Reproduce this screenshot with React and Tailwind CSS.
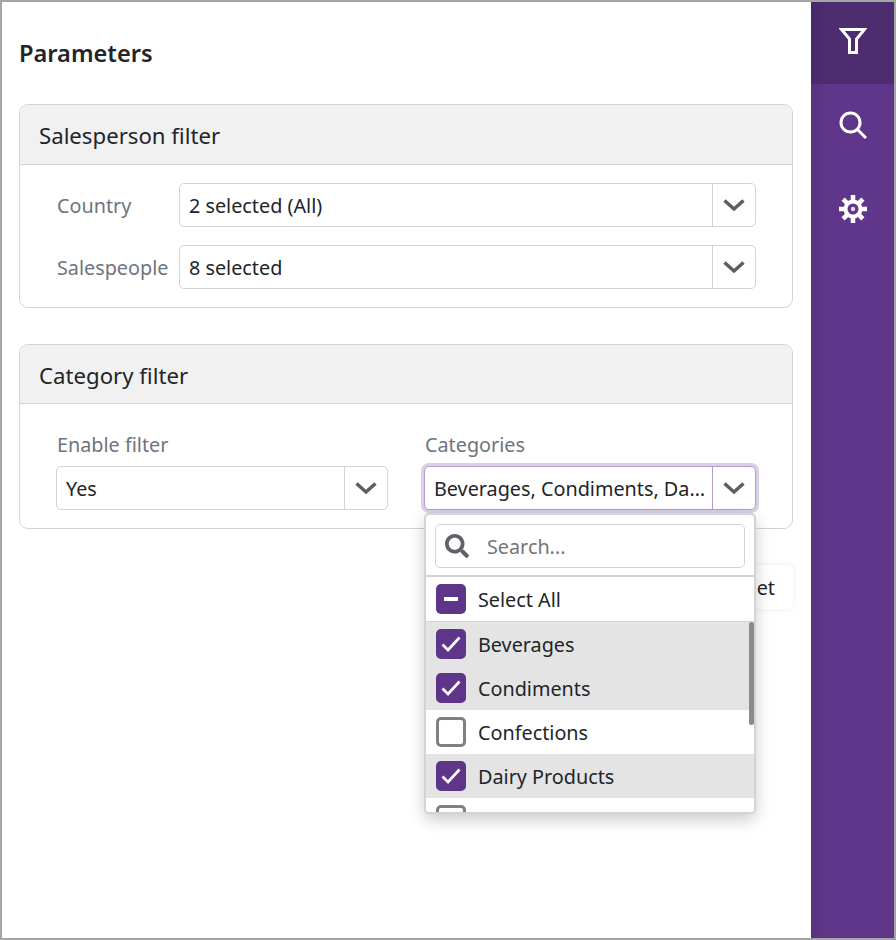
import React from 'react'
import { FaSearch } from 'react-icons/fa'

function Chevron() {
    return (
        <svg width="22" height="14" viewBox="0 0 22 14" fill="none" stroke="#5a5e62" strokeWidth="3.5">
            <path d="M1.5 2.5 L11 11 L20.5 2.5" />
        </svg>
    )
}

function Select({ value, focused, className = '' }) {
    const border = focused ? 'border-[#b39dcc] shadow-[0_0_0_3px_#d9cfe6]' : 'border-[#d3d3d3]'
    const divider = focused ? 'border-[#b39dcc]' : 'border-[#d3d3d3]'
    return (
        <div className={`flex h-[44px] items-stretch rounded-[5px] border bg-white ${border} ${className}`}>
            <div className="min-w-0 flex-1 truncate pl-[9px] pr-[5px] text-[19.8px] leading-[44px] text-[#212529]">{value}</div>
            <div className={`flex w-[43px] shrink-0 items-center justify-center border-l ${divider}`}>
                <Chevron />
            </div>
        </div>
    )
}

function Card({ title, headerClass, children }) {
    return (
        <section className="rounded-[9px] border border-[#d3d3d3] bg-white">
            <h2 className={`rounded-t-[8px] border-b border-[#d3d3d3] bg-[#f1f1f1] pl-[19px] text-[22.2px] font-normal leading-[61px] text-[#212529] ${headerClass}`}>{title}</h2>
            {children}
        </section>
    )
}

function CheckBox({ state }) {
    if (state === 'off') {
        return <span className="h-[30px] w-[30px] shrink-0 rounded-[5px] border-[3px] border-[#808080] bg-white" />
    }
    return (
        <span className="flex h-[30px] w-[30px] shrink-0 items-center justify-center rounded-[5px] bg-[#5f358a]">
            {state === 'on' ? (
                <svg width="20" height="16" viewBox="0 0 20 16" fill="none" stroke="white" strokeWidth="2.6">
                    <path d="M1.5 8.5 L7 14 L18.5 1.5" />
                </svg>
            ) : (
                <span className="h-[4px] w-[14px] bg-white" />
            )}
        </span>
    )
}

function Row({ label, state }) {
    return (
        <div className={`flex h-[44px] shrink-0 items-center gap-3 pl-[10px] text-[19.8px] text-[#212529] ${state === 'on' ? 'bg-[#e4e4e4]' : 'bg-white'}`}>
            <CheckBox state={state} />
            <span className="pt-[2px]">{label}</span>
        </div>
    )
}

const categories = [
    { label: 'Beverages', state: 'on' },
    { label: 'Condiments', state: 'on' },
    { label: 'Confections', state: 'off' },
    { label: 'Dairy Products', state: 'on' },
    { label: 'Grains/Cereals', state: 'off' },
]

function Dropdown() {
    return (
        <div className="absolute left-0 top-[83px] z-10 h-[301px] w-[332px] overflow-hidden rounded-[5px] border-2 border-[#d3d3d3] bg-white shadow-[0_6px_16px_rgba(0,0,0,0.2)]">
            <div className="h-[62px] border-b-2 border-[#d3d3d3] pl-[9px] pr-[9px] pt-[9px]">
                <div className="flex h-[44px] items-center rounded-[5px] border border-[#d3d3d3] pl-[9px]">
                    <FaSearch size={24} color="#5f6368" />
                    <span className="ml-[18px] pt-[2px] text-[19.8px] text-[#757575]">Search...</span>
                </div>
            </div>
            <Row label="Select All" state="some" />
            <div className="relative border-t border-[#d3d3d3]">
                {categories.map((c) => (
                    <Row key={c.label} label={c.label} state={c.state} />
                ))}
                <div className="absolute right-0 top-0 h-[103px] w-[5px] rounded-full bg-[#8a8a8a]" />
            </div>
        </div>
    )
}

function Gear() {
    return (
        <svg width="28" height="28" viewBox="0 0 28 28">
            <g stroke="white" strokeWidth="4.5">
                <path d="M14 0 V28 M0 14 H28 M4.1 4.1 L23.9 23.9 M23.9 4.1 L4.1 23.9" />
            </g>
            <circle cx="14" cy="14" r="9.5" fill="white" />
            <circle cx="14" cy="14" r="5.5" fill="#60368b" />
            <circle cx="14" cy="14" r="2.2" fill="#e6dcf0" />
        </svg>
    )
}

function Sidebar() {
    return (
        <nav className="flex w-[83px] shrink-0 flex-col bg-[linear-gradient(90deg,#57327c,#60368b_16px)] text-white">
            <div className="flex h-[82px] items-center justify-center bg-[linear-gradient(90deg,#48296a,#4d2c70_16px)] pb-[4px]">
                <svg width="28" height="26" viewBox="0 0 28 26" fill="none" stroke="white" strokeWidth="3">
                    <path d="M2.5 1.5 H25.5 L17.5 11 V24.5 H10.5 V11 Z" />
                </svg>
            </div>
            <div className="flex h-[84px] items-center justify-center pb-[3px]">
                <svg width="28" height="28" viewBox="0 0 28 28" fill="none" stroke="white" strokeWidth="3">
                    <circle cx="11.5" cy="11.5" r="9.5" />
                    <path d="M18.5 18.5 L27 27" />
                </svg>
            </div>
            <div className="flex h-[84px] items-center justify-center pb-[2px]">
                <Gear />
            </div>
        </nav>
    )
}

export default function App() {
    return (
        <div className="flex h-[940px] w-[896px] overflow-hidden border-2 border-[#a6a6a6] bg-white font-['Noto_Sans',sans-serif]">
            <main className="min-w-0 flex-1 pl-[17px] pr-[18px] pt-[34px]">
                <h1 className="h-[68px] text-[23.6px] font-semibold leading-[34px] text-[#212529]">Parameters</h1>

                <Card title="Salesperson filter" headerClass="h-[60px]">
                    <div className="flex flex-col gap-[18px] pb-[18px] pl-[37px] pr-[36px] pt-[18px]">
                        <div className="flex items-center">
                            <label className="w-[122px] pt-px text-[19.8px] text-[#6c757d]">Country</label>
                            <Select value="2 selected (All)" className="flex-1" />
                        </div>
                        <div className="flex items-center">
                            <label className="w-[122px] pt-px text-[19.8px] text-[#6c757d]">Salespeople</label>
                            <Select value="8 selected" className="flex-1" />
                        </div>
                    </div>
                </Card>

                <div className="mt-[36px]">
                    <Card title="Category filter" headerClass="h-[59px]">
                        <div className="relative grid grid-cols-[332px_332px] gap-x-[36px] pb-[18px] pl-[36px] pt-[26px]">
                            <div>
                                <label className="block h-[36px] pl-px text-[19.8px] leading-[30px] text-[#6c757d]">Enable filter</label>
                                <Select value="Yes" />
                            </div>
                            <div className="relative">
                                <label className="block h-[36px] pl-px text-[19.8px] leading-[30px] text-[#6c757d]">Categories</label>
                                <Select value="Beverages, Condiments, Dairy Products" focused />
                                <Dropdown />
                            </div>
                        </div>
                    </Card>
                </div>

                <div className="mt-[36px] flex justify-end">
                    <button className="h-[44px] rounded-[5px] bg-white px-[18px] pt-[2px] text-[19.8px] text-[#212529] shadow-[0_0_6px_rgba(0,0,0,0.08)]">Reset</button>
                </div>
            </main>
            <Sidebar />
        </div>
    )
}
